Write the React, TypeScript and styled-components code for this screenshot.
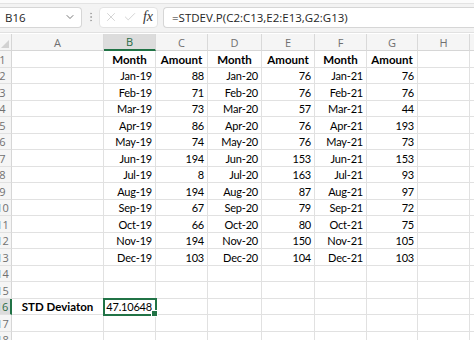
import React from "react";
import styled, { createGlobalStyle } from "styled-components";
import { ChevronDown, EllipsisVertical, X, Check } from "lucide-react";

const GlobalStyle = createGlobalStyle`
  html, body {
    margin: 0;
    padding: 0;
    background: #ffffff;
    overflow: hidden;
  }
  * {
    box-sizing: border-box;
  }
`;

const Window = styled.div`
  width: 474px;
  height: 340px;
  display: flex;
  flex-direction: column;
  background: #ffffff;
  overflow: hidden;
  font-family: "Open Sans", "Liberation Sans", sans-serif;
`;

const TopStrip = styled.div`
  height: 4px;
  background: #fbfbfb;
  border-bottom: 1px solid #e3e3e3;
`;

const FormulaBar = styled.div`
  height: 29px;
  display: flex;
  align-items: center;
  background: #f3f3f3;
  border-bottom: 1px solid #e1e1e1;
  padding-bottom: 2px;
`;

const NameBox = styled.div`
  width: 82px;
  height: 21px;
  display: flex;
  align-items: center;
  justify-content: space-between;
  padding: 0 5px 0 5px;
  background: #ffffff;
  border: 1px solid #d6d6d6;
  border-left: none;
  border-radius: 0 4px 4px 0;
  font-size: 11.5px;
  color: #262626;
`;

const Dots = styled.div`
  width: 17px;
  display: flex;
  justify-content: center;
  color: #a6a6a6;
`;

const FxBox = styled.div`
  width: 59px;
  height: 21px;
  display: flex;
  align-items: center;
  gap: 5px;
  padding: 0 4px;
  background: #ffffff;
  border: 1px solid #e3e3e3;
  border-radius: 4px;
  color: #c2c2c2;
`;

const FxLabel = styled.span`
  margin-left: auto;
  font-family: "Liberation Serif", serif;
  font-style: italic;
  font-size: 14px;
  color: #333333;
  line-height: 1;
`;

const FormulaInput = styled.div`
  flex: 1;
  height: 21px;
  margin-left: 5px;
  display: flex;
  align-items: center;
  padding-left: 8px;
  background: #ffffff;
  border: 1px solid #d6d6d6;
  border-right: none;
  border-radius: 4px 0 0 4px;
  font-size: 11.5px;
  color: #262626;
`;

const SheetViewport = styled.div`
  flex: 1;
  overflow: hidden;
  padding-top: 1px;
  background: #ffffff;
`;

const Grid = styled.div`
  margin-left: -6px;
  display: grid;
  grid-template-columns: 18px 92px 52px 52px 54px 53px 52px 51px 52px 60px;
  grid-template-rows: 17px repeat(9, 17px 16px);
`;

const Corner = styled.div`
  position: relative;
  background: #f5f5f5;
  border-right: 1px solid #d6d6d6;
  border-bottom: 1px solid #d6d6d6;
  &::after {
    content: "";
    position: absolute;
    right: 2px;
    bottom: 2px;
    border-left: 8px solid transparent;
    border-bottom: 8px solid #d2d2d2;
  }
`;

const ColHead = styled.div<{ $active?: boolean }>`
  display: flex;
  align-items: center;
  justify-content: center;
  background: ${(p) => (p.$active ? "#dcdcdc" : "#f5f5f5")};
  border-right: 1px solid #d9d9d9;
  border-bottom: ${(p) => (p.$active ? "2px solid #217346" : "1px solid #d6d6d6")};
  font-size: 11px;
  color: ${(p) => (p.$active ? "#2b6b45" : "#707070")};
`;

const RowHead = styled.div<{ $active?: boolean }>`
  display: flex;
  align-items: center;
  justify-content: center;
  background: ${(p) => (p.$active ? "#dcdcdc" : "#f5f5f5")};
  border-right: ${(p) => (p.$active ? "2px solid #217346" : "1px solid #d6d6d6")};
  border-bottom: 1px solid #e1e1e1;
  font-size: 11px;
  color: ${(p) => (p.$active ? "#2b6b45" : "#707070")};
`;

const Cell = styled.div<{ $align?: "left" | "center" | "right"; $bold?: boolean; $selected?: boolean }>`
  position: relative;
  display: flex;
  align-items: center;
  justify-content: ${(p) =>
    p.$align === "right" ? "flex-end" : p.$align === "center" ? "center" : "flex-start"};
  padding: 0 3px 0 3px;
  border-right: 1px solid #e1e1e1;
  border-bottom: 1px solid #e1e1e1;
  font-family: "Lato", "Liberation Sans", sans-serif;
  font-size: ${(p) => (p.$bold ? "11.5px" : "11px")};
  letter-spacing: ${(p) => (p.$bold ? "0" : "-0.2px")};
  font-weight: ${(p) => (p.$bold ? 700 : 400)};
  color: #000000;
  white-space: nowrap;
  ${(p) =>
    p.$selected &&
    `
    outline: 2px solid #217346;
    outline-offset: -1px;
    z-index: 1;
    &::after {
      content: "";
      position: absolute;
      right: -3px;
      bottom: -3px;
      width: 5px;
      height: 5px;
      background: #217346;
      border: 1px solid #ffffff;
    }
  `}
`;

const months = ["Jan", "Feb", "Mar", "Apr", "May", "Jun", "Jul", "Aug", "Sep", "Oct", "Nov", "Dec"];
const amounts: Record<string, number[]> = {
  "19": [88, 71, 73, 86, 74, 194, 8, 194, 67, 66, 194, 103],
  "20": [76, 76, 57, 76, 76, 153, 163, 87, 79, 80, 150, 104],
  "21": [76, 76, 44, 193, 73, 153, 93, 97, 72, 75, 105, 103],
};
const years = ["19", "20", "21"];
const columns = ["A", "B", "C", "D", "E", "F", "G", "H", "I"];

type CellData = { text: string; align?: "left" | "center" | "right"; bold?: boolean; selected?: boolean };

const rowCells = (row: number): CellData[] => {
  const cells: CellData[] = columns.map(() => ({ text: "" }));
  if (row === 1) {
    years.forEach((_, i) => {
      cells[1 + i * 2] = { text: "Month", align: "center", bold: true };
      cells[2 + i * 2] = { text: "Amount", align: "center", bold: true };
    });
  } else if (row >= 2 && row <= 13) {
    const m = row - 2;
    years.forEach((y, i) => {
      cells[1 + i * 2] = { text: `${months[m]}-${y}`, align: "right" };
      cells[2 + i * 2] = { text: String(amounts[y][m]), align: "right" };
    });
  } else if (row === 16) {
    cells[0] = { text: "STD Deviaton", align: "center", bold: true };
    cells[1] = { text: "47.10648", align: "right", selected: true };
  }
  return cells;
};

const rows = Array.from({ length: 18 }, (_, i) => i + 1);

const App: React.FC = () => {
  return (
    <>
      <GlobalStyle />
      <Window>
        <TopStrip />
        <FormulaBar>
          <NameBox>
            <span>B16</span>
            <ChevronDown size={12} color="#555555" strokeWidth={1.6} />
          </NameBox>
          <Dots>
            <EllipsisVertical size={12} strokeWidth={2} />
          </Dots>
          <FxBox>
            <X size={14} strokeWidth={1.2} />
            <Check size={14} strokeWidth={1.2} />
            <FxLabel>fx</FxLabel>
          </FxBox>
          <FormulaInput>=STDEV.P(C2:C13,E2:E13,G2:G13)</FormulaInput>
        </FormulaBar>
        <SheetViewport>
          <Grid>
            <Corner />
            {columns.map((c) => (
              <ColHead key={c} $active={c === "B"}>
                {c}
              </ColHead>
            ))}
            {rows.map((r) => (
              <React.Fragment key={r}>
                <RowHead $active={r === 16}>{r}</RowHead>
                {rowCells(r).map((cell, i) => (
                  <Cell
                    key={i}
                    $align={cell.align}
                    $bold={cell.bold}
                    $selected={cell.selected}
                  >
                    {cell.text}
                  </Cell>
                ))}
              </React.Fragment>
            ))}
          </Grid>
        </SheetViewport>
      </Window>
    </>
  );
};

export default App;
